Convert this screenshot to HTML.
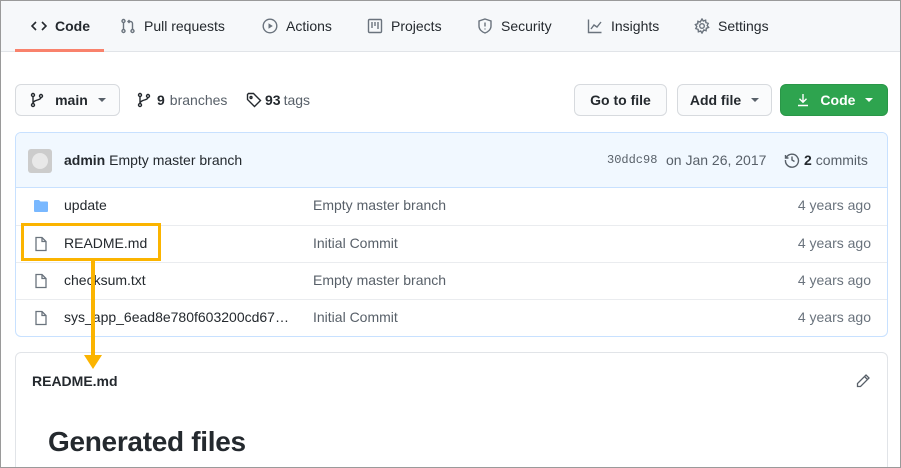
<!DOCTYPE html>
<html><head><meta charset="utf-8"><style>
*{box-sizing:border-box;margin:0;padding:0}
html,body{width:901px;height:468px;overflow:hidden}
body{background:#fff;font-family:"Liberation Sans",Helvetica,Arial,sans-serif;font-size:14px;color:#24292e;position:relative}
.frame{position:absolute;left:0;top:0;width:901px;height:468px;border:1px solid #9a9a9a;pointer-events:none;z-index:10}
.nav{position:absolute;left:0;top:0;width:901px;height:52px;background:#f6f8fa;border-bottom:1px solid #e1e4e8}
.tab{position:absolute;top:18px;font-size:14px;color:#24292e;display:flex;align-items:center;gap:8px;white-space:nowrap}
.tab svg{width:16px;height:16px;fill:none;stroke:#6a737d;stroke-width:1.4}
.ul{position:absolute;left:15px;top:49px;width:89px;height:3px;background:#f9826c}
.btn{position:absolute;top:84px;height:32px;border:1px solid #d7dade;border-radius:6px;background:#fafbfc;font-weight:bold;font-size:14px;display:flex;align-items:center;justify-content:center;gap:6px}
.caret{width:0;height:0;border-left:4px solid transparent;border-right:4px solid transparent;border-top:4px solid #586069;margin-left:4px}
.box{position:absolute;left:15px;width:873px;border:1px solid #e1e4e8;border-radius:6px;overflow:hidden}
.hdr{height:55px;background:#f1f8ff;border-bottom:1px solid #c8e1ff;position:relative}
.row{height:37px;border-top:1px solid #eaecef;position:relative;font-size:14px}
.row span{position:absolute;top:9px}
.ic{position:absolute;left:17px;top:10px}
</style></head><body>
<div class="nav">
 <div class="tab" style="left:31px;font-weight:bold"><svg viewBox="0 0 16 16" style="stroke:#24292e;stroke-width:1.6"><path d="M5 4L1 8l4 4M11 4l4 4-4 4"/></svg>Code</div>
 <div class="tab" style="left:120px"><svg viewBox="0 0 16 16"><circle cx="3.5" cy="3" r="1.5"/><circle cx="3.5" cy="13" r="1.5"/><circle cx="12.5" cy="13" r="1.5"/><path d="M3.5 4.5v7M12.5 11.5V5.5a2 2 0 0 0-2-2H8M9.5 2L8 3.5 9.5 5"/></svg>Pull requests</div>
 <div class="tab" style="left:262px"><svg viewBox="0 0 16 16"><circle cx="8" cy="8" r="6.8"/><path d="M6.5 5.2v5.6L10.8 8z" fill="#6a737d" stroke="none"/></svg>Actions</div>
 <div class="tab" style="left:367px"><svg viewBox="0 0 16 16"><rect x="1.5" y="1.5" width="13" height="13" rx="1"/><path d="M5 4v6M8 4v4M11 4v7"/></svg>Projects</div>
 <div class="tab" style="left:477px"><svg viewBox="0 0 16 16"><path d="M8 1l6 2v5c0 3.5-3 6-6 7-3-1-6-3.5-6-7V3z"/><path d="M8 4.5v4M8 10.5v1"/></svg>Security</div>
 <div class="tab" style="left:587px"><svg viewBox="0 0 16 16"><path d="M1.5 1.5v13h13M4 11l3-4 3 2 4-5"/></svg>Insights</div>
 <div class="tab" style="left:694px"><svg viewBox="0 0 16 16"><circle cx="8" cy="8" r="2.3"/><path d="M8 1l1.3 2 2.3-.8.3 2.4 2.3.8-1 2.1 1.4 1.9-2.3.9-.2 2.4-2.3-.7L8 15l-1.3-2-2.3.8-.3-2.4-2.3-.8 1-2.1L1.4 6.6l2.3-.9.2-2.4 2.3.7z"/></svg>Settings</div>
 <div class="ul"></div>
</div>

<div class="btn" style="left:15px;width:105px"><svg width="16" height="16" viewBox="0 0 16 16" fill="none" stroke="#24292e" stroke-width="1.4"><circle cx="4" cy="3" r="1.5"/><circle cx="4" cy="13" r="1.5"/><circle cx="12" cy="4" r="1.5"/><path d="M4 4.5v7M12 5.5c0 3-8 2-8 6"/></svg>&nbsp;main<span class="caret"></span></div>
<div style="position:absolute;left:136px;top:92px;display:flex;align-items:center;gap:5px;color:#586069"><svg width="16" height="16" viewBox="0 0 16 16" fill="none" stroke="#24292e" stroke-width="1.4"><circle cx="4" cy="3" r="1.5"/><circle cx="4" cy="13" r="1.5"/><circle cx="12" cy="4" r="1.5"/><path d="M4 4.5v7M12 5.5c0 3-8 2-8 6"/></svg><b style="color:#24292e">9</b> branches</div>
<div style="position:absolute;left:246px;top:92px;display:flex;align-items:center;gap:3px;color:#586069"><svg width="16" height="16" viewBox="0 0 16 16" fill="none" stroke="#24292e" stroke-width="1.4"><path d="M1.5 2.5v5l7 7 6-6-7-7h-5z"/><circle cx="5" cy="5.5" r="1"/></svg><b style="color:#24292e">93</b> tags</div>

<div class="btn" style="left:574px;width:93px">Go to file</div>
<div class="btn" style="left:677px;width:95px">Add file<span class="caret"></span></div>
<div class="btn" style="left:780px;width:108px;background:#2ea44f;border-color:#2a9748;color:#fff"><svg width="16" height="16" viewBox="0 0 16 16" fill="none" stroke="#fff" stroke-width="1.4"><path d="M8 2v8M4.5 6.8L8 10.3l3.5-3.5M3 13.5h10"/></svg>&nbsp;Code<span class="caret" style="border-top-color:#fff"></span></div>

<div class="box" style="top:132px;height:205px;border-color:#c8e1ff">
 <div class="hdr">
  <div style="position:absolute;left:12px;top:16px;width:24px;height:24px;background:#ccc;border-radius:3px"><svg viewBox="0 0 24 24" width="24" height="24"><circle cx="12" cy="12" r="8" fill="#e8e8e8"/></svg></div>
  <span style="position:absolute;left:48px;top:19px"><b>admin</b> Empty master branch</span>
  <span style="position:absolute;left:591px;top:20px;font-family:'Liberation Mono',monospace;font-size:12px;color:#586069">30ddc98</span>
  <span style="position:absolute;left:650px;top:19px;color:#586069">on Jan 26, 2017</span>
  <span style="position:absolute;left:768px;top:19px;display:flex;align-items:center;gap:4px;color:#586069"><svg width="16" height="16" viewBox="0 0 16 16" fill="none" stroke="#586069" stroke-width="1.4"><path d="M2.3 5.5A6.5 6.5 0 1 1 1.5 8M1.5 3v3h3M8 4.5V8l2.5 1.5"/></svg><b style="color:#24292e">2</b> commits</span>
 </div>
 <div class="row" style="border-top:none"><svg class="ic" width="16" height="16" viewBox="0 0 16 16"><path d="M1 3a1 1 0 0 1 1-1h4l1.5 1.5H14a1 1 0 0 1 1 1V13a1 1 0 0 1-1 1H2a1 1 0 0 1-1-1z" fill="#79b8ff"/></svg><span style="left:48px">update</span><span style="left:297px;color:#586069">Empty master branch</span><span style="right:16px;color:#6a737d">4 years ago</span></div>
 <div class="row"><svg class="ic" width="16" height="16" viewBox="0 0 16 16" fill="none" stroke="#6a737d" stroke-width="1.3"><path d="M3 1.5h6l4 4v9H3z M9 1.5v4h4"/></svg><span style="left:48px">README.md</span><span style="left:297px;color:#586069">Initial Commit</span><span style="right:16px;color:#6a737d">4 years ago</span></div>
 <div class="row"><svg class="ic" width="16" height="16" viewBox="0 0 16 16" fill="none" stroke="#6a737d" stroke-width="1.3"><path d="M3 1.5h6l4 4v9H3z M9 1.5v4h4"/></svg><span style="left:48px">checksum.txt</span><span style="left:297px;color:#586069">Empty master branch</span><span style="right:16px;color:#6a737d">4 years ago</span></div>
 <div class="row"><svg class="ic" width="16" height="16" viewBox="0 0 16 16" fill="none" stroke="#6a737d" stroke-width="1.3"><path d="M3 1.5h6l4 4v9H3z M9 1.5v4h4"/></svg><span style="left:48px">sys_app_6ead8e780f603200cd67…</span><span style="left:297px;color:#586069">Initial Commit</span><span style="right:16px;color:#6a737d">4 years ago</span></div>
</div>

<div class="box" style="top:352px;height:130px">
 <span style="position:absolute;left:16px;top:20px;font-weight:bold;font-size:14px">README.md</span>
 <svg style="position:absolute;right:16px;top:20px" width="16" height="16" viewBox="0 0 16 16" fill="none" stroke="#586069" stroke-width="1.3"><path d="M11 2l3 3-8.5 8.5H2.5v-3z M9.5 3.5l3 3"/></svg>
 <div style="position:absolute;left:32px;top:73px;font-size:28px;font-weight:bold;letter-spacing:-0.3px">Generated files</div>
</div>

<div style="position:absolute;left:21px;top:223px;width:140px;height:38px;border:3px solid #fbb400"></div>
<div style="position:absolute;left:91px;top:261px;width:4px;height:96px;background:#fbb400"></div>
<div style="position:absolute;left:84px;top:355px;width:0;height:0;border-left:9px solid transparent;border-right:9px solid transparent;border-top:14px solid #fbb400"></div>
<div class="frame"></div>
</body></html>
